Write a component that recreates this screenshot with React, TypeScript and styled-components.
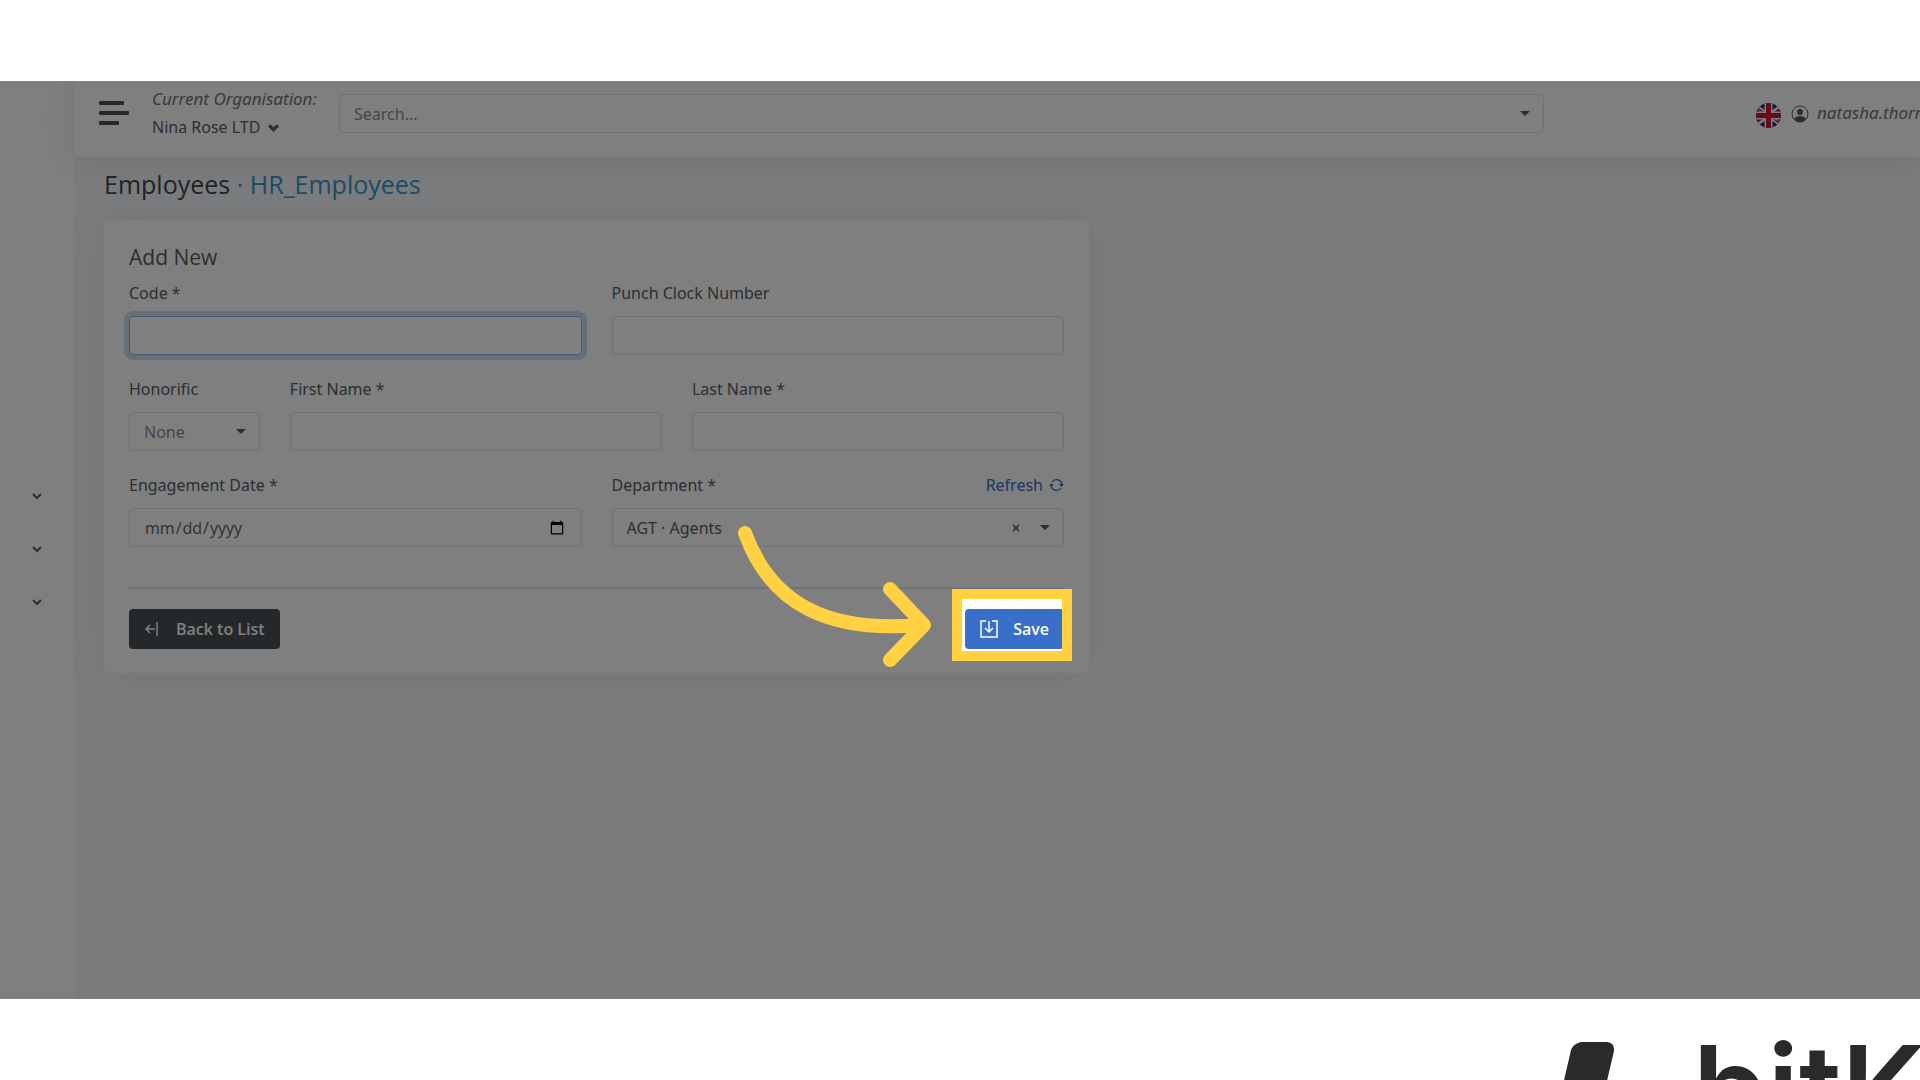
import React from "react";
import styled, { createGlobalStyle, css } from "styled-components";

const GlobalStyle = createGlobalStyle`
  *, *::before, *::after { box-sizing: border-box; }
  body { margin: 0; background: #fff; }
  body, button, input, select { font-family: "Noto Sans", "Open Sans", sans-serif; font-size: 16px; }
`;

const Page = styled.div`
  display: grid;
  grid-template-rows: 81px 1fr 81px;
  grid-template-columns: minmax(0, 1fr);
  height: 100vh;
  overflow: hidden;
  color: #565d64;
`;

const Screen = styled.div`
  position: relative;
  grid-row: 2;
  display: flex;
  min-height: 0;
  overflow: hidden;
  background: #fff;
`;

const Sidebar = styled.nav`
  flex: none;
  width: 74px;
  padding: 402px 0 0 24px;
  display: flex;
  flex-direction: column;
  gap: 27px;
`;

const SideToggle = styled.button`
  display: grid;
  place-items: center;
  width: 26px;
  height: 26px;
  padding: 0;
  border: 0;
  background: none;
  color: #565d64;
`;

const Main = styled.div`
  flex: 1;
  min-width: 0;
  display: flex;
  flex-direction: column;
  background: #f6f8fb;
`;

const Header = styled.header`
  display: flex;
  align-items: flex-start;
  height: 76px;
  padding: 0 0 0 25px;
  background: #fff;
  box-shadow: 0 0 35px rgba(73, 80, 87, 0.15);
`;

const MenuButton = styled.button`
  display: flex;
  flex-direction: column;
  gap: 6px;
  width: 30px;
  margin: 20px 23px 0 0;
  padding: 0;
  border: 0;
  background: none;
`;

const MenuLine = styled.span<{ $width: number }>`
  width: ${(p) => p.$width}px;
  height: 4px;
  border-radius: 1px;
  background: #495057;
`;

const Organisation = styled.div`
  flex: none;
  width: 187px;
  padding-top: 4px;
  line-height: 28px;
  white-space: nowrap;
`;

const OrganisationCaption = styled.div`
  font-size: 17px;
  font-style: italic;
  color: #6c757d;
`;

const OrganisationButton = styled.button`
  display: flex;
  align-items: center;
  gap: 8px;
  padding: 0;
  border: 0;
  background: none;
  line-height: 28px;
  color: #565d64;
`;

const SearchWrap = styled.div`
  flex: 1;
  max-width: 1205px;
  margin-top: 13px;
`;

const Account = styled.div`
  display: flex;
  align-items: center;
  flex: none;
  width: 164px;
  margin: 22px 0 0 auto;
  overflow: hidden;
  white-space: nowrap;
  font-size: 17px;
  font-style: italic;
  line-height: 24px;
  color: #6c757d;
`;

const FlagIcon = styled.svg`
  flex: none;
`;

const AccountIcon = styled.svg`
  flex: none;
  margin: -4px 8px 0 10px;
  color: #565d64;
`;

const AccountLink = styled.a`
  margin-top: -6px;
  color: inherit;
  text-decoration: none;
`;

const Content = styled.main`
  padding: 13px 30px 0;
`;

const Title = styled.h1`
  margin: 0 0 22px;
  font-family: "Open Sans", sans-serif;
  font-size: 25px;
  line-height: 28px;
  font-weight: 400;
  color: #41474d;
`;

const TitleAccent = styled.span`
  color: #3498c8;
`;

const Card = styled.section`
  max-width: 985px;
  padding: 24px 25px;
  border-radius: 5px;
  background: #fff;
  box-shadow: 0 0 35px rgba(154, 161, 171, 0.15);
`;

const CardTitle = styled.h2`
  margin: 0 0 7px;
  font-family: "Open Sans", sans-serif;
  font-size: 21px;
  line-height: 26px;
  font-weight: 400;
`;

const Fields = styled.div`
  display: grid;
  grid-template-columns: repeat(12, minmax(0, 1fr));
  column-gap: 30px;
  row-gap: 18px;
`;

const Field = styled.div<{ $span: number }>`
  grid-column: span ${(p) => p.$span};
`;

const LabelRow = styled.div`
  display: flex;
  justify-content: space-between;
  height: 39px;
  padding-top: 4px;
  line-height: 24px;
`;

const RefreshLink = styled.a`
  display: flex;
  align-items: center;
  gap: 6px;
  height: 24px;
  color: #376fc9;
  text-decoration: none;
`;

const controlStyle = css`
  display: block;
  width: 100%;
  height: 39px;
  padding: 0 14px;
  border: 1px solid #dee2e6;
  border-radius: 4px;
  background: #fff;
  outline: none;
`;

const TextInput = styled.input<{ $active?: boolean }>`
  ${controlStyle}
  font-family: "Open Sans", sans-serif;
  color: #565d64;
  ${(p) =>
    p.$active &&
    css`
      border-color: #93afe4;
      box-shadow: 0 0 0 5px #cddcf5;
    `}
`;

const SelectWrap = styled.div`
  position: relative;
`;

const Select = styled.select<{ $muted?: boolean }>`
  ${controlStyle}
  appearance: none;
  color: ${(p) => (p.$muted ? "#868e96" : "#565d64")};
`;

const SelectCaret = styled.span`
  position: absolute;
  top: 17px;
  right: 14px;
  border: 5px solid transparent;
  border-top-color: #565d64;
  border-bottom: 0;
  pointer-events: none;
`;

const ClearButton = styled.button`
  position: absolute;
  top: 10px;
  right: 38px;
  display: grid;
  place-items: center;
  width: 20px;
  height: 20px;
  padding: 0;
  border: 0;
  background: none;
  color: #565d64;
`;

const Divider = styled.hr`
  height: 2px;
  margin: 40px 0 20px;
  border: 0;
  background: #e2e4e6;
`;

const Actions = styled.div`
  display: flex;
  justify-content: space-between;
`;

const ActionButton = styled.button<{ $tone: string; $gap: number }>`
  display: flex;
  align-items: center;
  gap: ${(p) => p.$gap}px;
  height: 40px;
  padding: 0 15px;
  border: 0;
  border-radius: 4px;
  background: ${(p) => p.$tone};
  color: #fff;
  font-family: "Open Sans", sans-serif;
  font-weight: 600;
`;

const Spotlight = styled.div`
  position: relative;
`;

const SpotlightFrame = styled.div`
  position: absolute;
  inset: -20px -8px -12px -13px;
  border: 10px solid #ffd143;
  box-shadow: 0 0 0 4000px rgba(0, 0, 0, 0.5);
  pointer-events: none;
`;

const SpotlightArrow = styled.svg`
  position: absolute;
  right: 130px;
  bottom: -20px;
  pointer-events: none;
`;

const Footer = styled.footer`
  grid-row: 3;
  display: flex;
  justify-content: flex-end;
  align-items: flex-start;
  overflow: hidden;
  color: #2b292c;
`;

const LogoMark = styled.svg`
  flex: none;
  margin: 43px 74px 0 0;
`;

const Wordmark = styled.span`
  flex: none;
  margin: 30px -6px 0 0;
  font-family: Inter, "Open Sans", sans-serif;
  font-size: 120px;
  font-weight: 600;
  line-height: 120px;
`;

function Chevron({ width = 10, weight = 2 }: { width?: number; weight?: number }) {
  return (
    <svg width={width} height={width} viewBox="0 0 10 10" fill="none" stroke="currentColor" strokeWidth={weight} aria-hidden="true">
      <path d="M1 3l4 4 4-4" />
    </svg>
  );
}

function Flag() {
  return (
    <FlagIcon width="25" height="25" viewBox="0 0 25 25" aria-label="English" role="img">
      <defs>
        <clipPath id="flag-round"><circle cx="12.5" cy="12.5" r="12.5" /></clipPath>
      </defs>
      <g clipPath="url(#flag-round)">
        <path d="M0 0h25v25H0z" fill="#0a2a96" />
        <path d="M0 3l25 19M25 3L0 22" stroke="#fff" strokeWidth="4" />
        <path d="M0 4l10 7M25 21l-10-7M25 5l-9 6M0 20l9-6" stroke="#d80027" strokeWidth="1.5" />
        <path d="M12.5 0v25M0 12.5h25" stroke="#fff" strokeWidth="8" />
        <path d="M12.5 0v25M0 12.5h25" stroke="#d8102d" strokeWidth="5" />
      </g>
    </FlagIcon>
  );
}

export default function App() {
  return (
    <>
      <GlobalStyle />
      <Page>
        <Screen>
          <Sidebar aria-label="Sections">
            {[1, 2, 3].map((n) => (
              <SideToggle key={n} aria-label={`Section ${n}`}><Chevron width={10} /></SideToggle>
            ))}
          </Sidebar>
          <Main>
            <Header>
              <MenuButton aria-label="Menu">
                <MenuLine $width={25} />
                <MenuLine $width={30} />
                <MenuLine $width={20} />
              </MenuButton>
              <Organisation>
                <OrganisationCaption>Current Organisation:</OrganisationCaption>
                <OrganisationButton>Nina Rose LTD <Chevron width={11} weight={3} /></OrganisationButton>
              </Organisation>
              <SearchWrap>
                <SelectWrap>
                  <Select aria-label="Search" defaultValue="" $muted>
                    <option value="">Search...</option>
                  </Select>
                  <SelectCaret />
                </SelectWrap>
              </SearchWrap>
              <Account>
                <Flag />
                <AccountIcon width="18" height="18" viewBox="0 0 18 18" aria-hidden="true">
                  <circle cx="9" cy="9" r="8" fill="none" stroke="currentColor" />
                  <circle cx="9" cy="7" r="3" fill="currentColor" />
                  <path d="M3 14c2-4 10-4 12 0-3 4-9 4-12 0z" fill="currentColor" />
                </AccountIcon>
                <AccountLink href="#account">natasha.thorn</AccountLink>
              </Account>
            </Header>
            <Content>
              <Title>Employees <TitleAccent>· HR_Employees</TitleAccent></Title>
              <Card>
                <CardTitle>Add New</CardTitle>
                <Fields>
                  <Field $span={6}>
                    <LabelRow><label htmlFor="code">Code *</label></LabelRow>
                    <TextInput id="code" $active />
                  </Field>
                  <Field $span={6}>
                    <LabelRow><label htmlFor="punch">Punch Clock Number</label></LabelRow>
                    <TextInput id="punch" />
                  </Field>
                  <Field $span={2}>
                    <LabelRow><label htmlFor="honorific">Honorific</label></LabelRow>
                    <SelectWrap>
                      <Select id="honorific" $muted><option>None</option></Select>
                      <SelectCaret />
                    </SelectWrap>
                  </Field>
                  <Field $span={5}>
                    <LabelRow><label htmlFor="first">First Name *</label></LabelRow>
                    <TextInput id="first" />
                  </Field>
                  <Field $span={5}>
                    <LabelRow><label htmlFor="last">Last Name *</label></LabelRow>
                    <TextInput id="last" />
                  </Field>
                  <Field $span={6}>
                    <LabelRow><label htmlFor="engaged">Engagement Date *</label></LabelRow>
                    <TextInput id="engaged" type="date" />
                  </Field>
                  <Field $span={6}>
                    <LabelRow>
                      <label htmlFor="department">Department *</label>
                      <RefreshLink href="#refresh">
                        Refresh
                        <svg width="15" height="14" viewBox="0 0 15 14" fill="none" stroke="currentColor" aria-hidden="true">
                          <path d="M3 4a5.5 5.5 0 0 1 10 3M12 10a5.5 5.5 0 0 1-10-3" strokeWidth="1.3" />
                          <path d="M10 6h5l-2.5 3zM0 8h5L2.5 5z" fill="currentColor" stroke="none" />
                        </svg>
                      </RefreshLink>
                    </LabelRow>
                    <SelectWrap>
                      <Select id="department"><option>AGT · Agents</option></Select>
                      <ClearButton aria-label="Clear department">
                        <svg width="8" height="8" viewBox="0 0 8 8" stroke="currentColor" strokeWidth="1.6" aria-hidden="true"><path d="M1 1l6 6M7 1L1 7" /></svg>
                      </ClearButton>
                      <SelectCaret />
                    </SelectWrap>
                  </Field>
                </Fields>
                <Divider />
                <Actions>
                  <ActionButton $tone="#495057" $gap={17}>
                    <svg width="15" height="16" viewBox="0 0 15 16" fill="none" stroke="currentColor" strokeWidth="1.5" aria-hidden="true">
                      <path d="M13 1v14M11 8H3M6 4L2 8l4 4" />
                    </svg>
                    Back to List
                  </ActionButton>
                  <Spotlight>
                    <ActionButton $tone="#376fc9" $gap={15}>
                      <svg width="18" height="18" viewBox="0 0 18 18" fill="none" stroke="currentColor" strokeWidth="1.5" aria-hidden="true">
                        <path d="M6 1H1v16h16V1h-5M9 1v11M5 8l4 4 4-4" />
                      </svg>
                      Save
                    </ActionButton>
                    <SpotlightFrame />
                    <SpotlightArrow width="200" height="146" viewBox="0 0 200 146" fill="none" stroke="#ffd143" strokeWidth="14" strokeLinecap="round" strokeLinejoin="round" aria-hidden="true">
                      <path d="M11 10C37 82 95 110 186 102M156 66l34 36-34 35" />
                    </SpotlightArrow>
                  </Spotlight>
                </Actions>
              </Card>
            </Content>
          </Main>
        </Screen>
        <Footer>
          <LogoMark width="60" height="60" viewBox="0 0 60 60" fill="currentColor" aria-hidden="true">
            <path d="M22 0h26q8 1 7 9L43 60H0L12 8Q14 2 22 0z" />
          </LogoMark>
          <Wordmark>bitK</Wordmark>
        </Footer>
      </Page>
    </>
  );
}
